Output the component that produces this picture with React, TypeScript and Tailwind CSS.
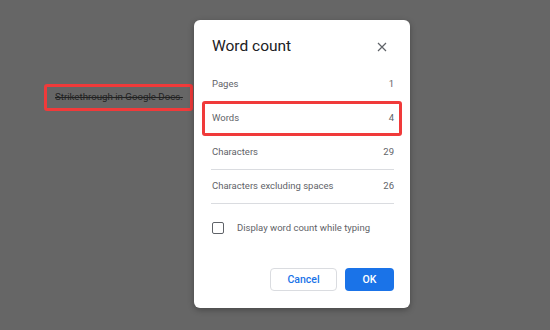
import React from "react";

const font = { fontFamily: "Roboto, 'Noto Sans', Arial, sans-serif" };

function Row({ label, value, highlight }: { label: string; value: string; highlight?: boolean }) {
  return (
    <div className="relative flex h-[34px] items-center justify-between border-b border-[#dadce0] pl-[1px]">
      <span className="text-[9.5px] text-[#5f6368]">{label}</span>
      <span className="text-[9.5px] text-[#5f6368]">{value}</span>
      {highlight && (
        <div className="pointer-events-none absolute left-[-9px] right-[-8px] top-[-1px] bottom-[-1px] rounded-[3px] border-[3px] border-[#f03a3a]" />
      )}
    </div>
  );
}

export default function App() {
  return (
    <div className="flex h-[330px] w-[550px] items-start bg-[#666666] pl-[44px]" style={font}>
      <div className="mt-[84px] flex h-[27px] w-[149px] items-center overflow-hidden whitespace-nowrap rounded-[3px] border-[3px] border-[#f03a3a] pl-[8px]">
        <span className="text-[9.7px] text-[#222222] line-through">Strikethrough in Google Docs.</span>
      </div>
      <div className="ml-[1px] mt-[20px] flex h-[288px] w-[216px] flex-col rounded-[6px] bg-white pl-[17px] pr-[16px] pt-[15px] shadow-[0_2px_6px_rgba(0,0,0,0.3)]">
        <div className="flex h-[24px] items-center justify-between">
          <span className="pl-[1px] text-[15.5px] text-[#202124]">Word count</span>
          <svg width="10" height="10" viewBox="0 0 10 10" className="mr-[7px]">
            <path d="M1 1 L9 9 M9 1 L1 9" stroke="#5f6368" strokeWidth="1.2" />
          </svg>
        </div>
        <div className="mt-[9px] flex flex-col">
          <Row label="Pages" value="1" />
          <Row label="Words" value="4" highlight />
          <Row label="Characters" value="29" />
          <Row label="Characters excluding spaces" value="26" />
        </div>
        <div className="mt-[17px] flex items-center gap-[13px] pl-[1px]">
          <div className="h-[12px] w-[12px] rounded-[2px] border-[1.5px] border-[#5f6368]" />
          <span className="text-[9.5px] text-[#5f6368]">Display word count while typing</span>
        </div>
        <div className="mt-auto mb-[17px] flex justify-end gap-[8px]">
          <button className="h-[23px] w-[67px] rounded-[4px] border border-[#dadce0] bg-white text-[10.5px] font-medium text-[#1a73e8]">Cancel</button>
          <button className="h-[23px] w-[49px] rounded-[4px] bg-[#1a73e8] text-[10.5px] font-medium text-white">OK</button>
        </div>
      </div>
    </div>
  );
}
